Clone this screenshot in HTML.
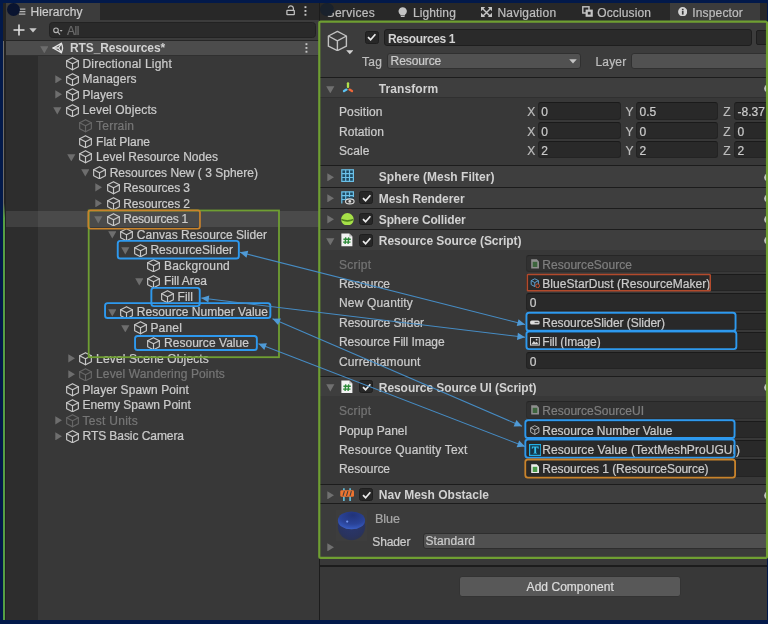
<!DOCTYPE html>
<html lang="en"><head><meta charset="utf-8"><title>Unity Hierarchy and Inspector</title>
<style>
html,body{margin:0;padding:0;overflow:hidden;}
html{width:768px;height:624px;}
body{width:768px;height:624px;overflow:hidden;background:#02194a;position:relative;
font-family:"Liberation Sans",sans-serif;font-size:12px;}
#root{position:absolute;left:0;top:0;width:768px;height:624px;overflow:hidden;will-change:transform;}
.a{position:absolute;display:block;}
.t{position:absolute;white-space:nowrap;line-height:16px;height:16px;-webkit-text-stroke:0.22px currentColor;}
</style></head><body><div id="root">
<div class="a" style="left:3px;top:3.4px;width:315.8px;height:616.6px;background:#383838;"></div>
<div class="a" style="left:3px;top:3.4px;width:4px;height:616.6px;background:#232323;"></div>
<div class="a" style="left:6px;top:3.4px;width:312.8px;height:16.4px;background:#282828;"></div>
<div class="a" style="left:6px;top:3.4px;width:93.6px;height:17px;background:#3c3c3c;"></div>
<div class="a" style="left:6px;top:19.8px;width:312.8px;height:20px;background:#3c3c3c;"></div>
<div class="a" style="left:6px;top:39.6px;width:313px;height:1.2px;background:#262626;"></div>
<div class="a" style="left:48.5px;top:22.3px;width:267px;height:15.3px;background:#2a2a2a;border:1px solid #222;box-sizing:border-box;border-radius:3.5px;"></div>
<div class="a" style="left:6px;top:41px;width:31.6px;height:579px;background:#2d2d2d;"></div>
<div class="a" style="left:6px;top:40.8px;width:313px;height:14.2px;background:#4c4c4c;"></div>
<div class="a" style="left:6px;top:55px;width:313px;height:0.8px;background:#303030;"></div>
<div class="a" style="left:6px;top:210.9px;width:312.8px;height:16.2px;background:#4a4a4a;"></div>
<div class="a" style="left:6px;top:210.9px;width:31.6px;height:16.2px;background:#404040;"></div>
<div class="a" style="left:3px;top:41px;width:1px;height:176px;background:#6c6c6c;"></div>
<div class="a" style="left:3px;top:203px;width:2px;height:417px;background:linear-gradient(to bottom,rgba(85,160,69,0) 0px,#55a045 15px,#55a045 100%);"></div>
<svg class="a" style="left:19.3px;top:7.5px;" width="6.4" height="7" viewBox="0 0 6.4 7"><g stroke="#b4b4b4" stroke-width="1.25"><path d="M0 1H6.4M0 3.55H6.4M0 6.1H6.4"/></g></svg>
<svg class="a" style="left:13px;top:24px;" width="12" height="12" viewBox="0 0 12 12"><path d="M6 0.5V11.5M0.5 6H11.5" stroke="#e0e0e0" stroke-width="1.6"/></svg>
<svg class="a" style="left:29px;top:28px;" width="8" height="5" viewBox="0 0 8 5"><path d="M0.3 0.3H7.7L4 4.6Z" fill="#c8c8c8"/></svg>
<svg class="a" style="left:53px;top:26.5px;" width="10" height="9" viewBox="0 0 10 9"><g fill="none" stroke="#b8b8b8" stroke-width="1.1"><circle cx="3" cy="3.3" r="2.3"/><path d="M4.8 5 L7 7.6"/></g><path d="M6.6 3 H9.6 L8.1 4.8 Z" fill="#b8b8b8"/></svg>
<svg class="a" style="left:285.6px;top:5.4px;" width="9.4" height="10.6" viewBox="0 0 9.4 10.6"><g fill="none" stroke="#c0c0c0" stroke-width="1.25"><path d="M2.3 2.9 A2.6 2.6 0 0 1 7.4 3.2 V5.4"/><rect x="0.9" y="5.5" width="7.4" height="4.2" rx="0.5"/></g></svg>
<svg class="a" style="left:303.9px;top:5.9px;" width="3" height="10" viewBox="0 0 3 10"><g fill="#c4c4c4"><rect x="0.5" y="0.2" width="1.9" height="1.9"/><rect x="0.5" y="4" width="1.9" height="1.9"/><rect x="0.5" y="7.8" width="1.9" height="1.9"/></g></svg>
<svg class="a" style="left:304.9px;top:43.1px;" width="3" height="10" viewBox="0 0 3 10"><g fill="#c4c4c4"><rect x="0.5" y="0.2" width="1.9" height="1.9"/><rect x="0.5" y="4" width="1.9" height="1.9"/><rect x="0.5" y="7.8" width="1.9" height="1.9"/></g></svg>
<svg class="a" style="left:39.7px;top:45.6px;" width="8.6" height="7.6" viewBox="0 0 8.6 7.6"><path d="M0.2 0.3 L8.4 0.3 L4.3 7.4 Z" fill="#6c6c6c"/></svg>
<svg class="a" style="left:51.8px;top:41.7px;" width="12" height="12" viewBox="0 0 13.4 13"><g fill="none" stroke="#e4e4e4" stroke-width="1.5" stroke-linejoin="round" stroke-linecap="round"><path d="M1.2 6.5 L10.4 1.3 Q13.2 6.5 10.4 11.7 Z"/><path d="M1.2 6.5 H7.4 M7.4 6.5 L10.6 1.2 M7.4 6.5 L10.6 11.8"/></g></svg>
<svg class="a" style="left:65.8px;top:57.32px;" width="13.02" height="13.39" viewBox="0 0 14 14.4"><g fill="none" stroke="#c8c8c8" stroke-width="1.25" stroke-linejoin="round" stroke-linecap="round"><path d="M7 0.7 L13.3 4 L13.3 10.4 L7 13.7 L0.7 10.4 L0.7 4 Z"/><path d="M0.7 4 L7 7.2 L13.3 4 M7 7.2 V13.7"/></g></svg>
<svg class="a" style="left:65.8px;top:72.84px;" width="13.02" height="13.39" viewBox="0 0 14 14.4"><g fill="none" stroke="#c8c8c8" stroke-width="1.25" stroke-linejoin="round" stroke-linecap="round"><path d="M7 0.7 L13.3 4 L13.3 10.4 L7 13.7 L0.7 10.4 L0.7 4 Z"/><path d="M0.7 4 L7 7.2 L13.3 4 M7 7.2 V13.7"/></g></svg>
<svg class="a" style="left:54.5px;top:74.74px;" width="7.2" height="8.6" viewBox="0 0 7.2 8.6"><path d="M0.3 0.2 L7 4.3 L0.3 8.4 Z" fill="#6e6e6e"/></svg>
<svg class="a" style="left:65.8px;top:88.36px;" width="13.02" height="13.39" viewBox="0 0 14 14.4"><g fill="none" stroke="#c8c8c8" stroke-width="1.25" stroke-linejoin="round" stroke-linecap="round"><path d="M7 0.7 L13.3 4 L13.3 10.4 L7 13.7 L0.7 10.4 L0.7 4 Z"/><path d="M0.7 4 L7 7.2 L13.3 4 M7 7.2 V13.7"/></g></svg>
<svg class="a" style="left:54.5px;top:90.26px;" width="7.2" height="8.6" viewBox="0 0 7.2 8.6"><path d="M0.3 0.2 L7 4.3 L0.3 8.4 Z" fill="#6e6e6e"/></svg>
<svg class="a" style="left:65.8px;top:103.88px;" width="13.02" height="13.39" viewBox="0 0 14 14.4"><g fill="none" stroke="#c8c8c8" stroke-width="1.25" stroke-linejoin="round" stroke-linecap="round"><path d="M7 0.7 L13.3 4 L13.3 10.4 L7 13.7 L0.7 10.4 L0.7 4 Z"/><path d="M0.7 4 L7 7.2 L13.3 4 M7 7.2 V13.7"/></g></svg>
<svg class="a" style="left:53.4px;top:107.28px;" width="8.6" height="7.6" viewBox="0 0 8.6 7.6"><path d="M0.2 0.3 L8.4 0.3 L4.3 7.4 Z" fill="#6e6e6e"/></svg>
<svg class="a" style="left:79.38px;top:119.4px;" width="13.02" height="13.39" viewBox="0 0 14 14.4"><g fill="none" stroke="#666666" stroke-width="1.25" stroke-linejoin="round" stroke-linecap="round"><path d="M7 0.7 L13.3 4 L13.3 10.4 L7 13.7 L0.7 10.4 L0.7 4 Z"/><path d="M0.7 4 L7 7.2 L13.3 4 M7 7.2 V13.7"/></g></svg>
<svg class="a" style="left:79.38px;top:134.92px;" width="13.02" height="13.39" viewBox="0 0 14 14.4"><g fill="none" stroke="#c8c8c8" stroke-width="1.25" stroke-linejoin="round" stroke-linecap="round"><path d="M7 0.7 L13.3 4 L13.3 10.4 L7 13.7 L0.7 10.4 L0.7 4 Z"/><path d="M0.7 4 L7 7.2 L13.3 4 M7 7.2 V13.7"/></g></svg>
<svg class="a" style="left:79.38px;top:150.44px;" width="13.02" height="13.39" viewBox="0 0 14 14.4"><g fill="none" stroke="#c8c8c8" stroke-width="1.25" stroke-linejoin="round" stroke-linecap="round"><path d="M7 0.7 L13.3 4 L13.3 10.4 L7 13.7 L0.7 10.4 L0.7 4 Z"/><path d="M0.7 4 L7 7.2 L13.3 4 M7 7.2 V13.7"/></g></svg>
<svg class="a" style="left:66.98px;top:153.84px;" width="8.6" height="7.6" viewBox="0 0 8.6 7.6"><path d="M0.2 0.3 L8.4 0.3 L4.3 7.4 Z" fill="#6e6e6e"/></svg>
<svg class="a" style="left:92.96px;top:165.96px;" width="13.02" height="13.39" viewBox="0 0 14 14.4"><g fill="none" stroke="#c8c8c8" stroke-width="1.25" stroke-linejoin="round" stroke-linecap="round"><path d="M7 0.7 L13.3 4 L13.3 10.4 L7 13.7 L0.7 10.4 L0.7 4 Z"/><path d="M0.7 4 L7 7.2 L13.3 4 M7 7.2 V13.7"/></g></svg>
<svg class="a" style="left:80.56px;top:169.36px;" width="8.6" height="7.6" viewBox="0 0 8.6 7.6"><path d="M0.2 0.3 L8.4 0.3 L4.3 7.4 Z" fill="#6e6e6e"/></svg>
<svg class="a" style="left:106.54px;top:181.48px;" width="13.02" height="13.39" viewBox="0 0 14 14.4"><g fill="none" stroke="#c8c8c8" stroke-width="1.25" stroke-linejoin="round" stroke-linecap="round"><path d="M7 0.7 L13.3 4 L13.3 10.4 L7 13.7 L0.7 10.4 L0.7 4 Z"/><path d="M0.7 4 L7 7.2 L13.3 4 M7 7.2 V13.7"/></g></svg>
<svg class="a" style="left:95.24px;top:183.38px;" width="7.2" height="8.6" viewBox="0 0 7.2 8.6"><path d="M0.3 0.2 L7 4.3 L0.3 8.4 Z" fill="#6e6e6e"/></svg>
<svg class="a" style="left:106.54px;top:197.0px;" width="13.02" height="13.39" viewBox="0 0 14 14.4"><g fill="none" stroke="#c8c8c8" stroke-width="1.25" stroke-linejoin="round" stroke-linecap="round"><path d="M7 0.7 L13.3 4 L13.3 10.4 L7 13.7 L0.7 10.4 L0.7 4 Z"/><path d="M0.7 4 L7 7.2 L13.3 4 M7 7.2 V13.7"/></g></svg>
<svg class="a" style="left:95.24px;top:198.9px;" width="7.2" height="8.6" viewBox="0 0 7.2 8.6"><path d="M0.3 0.2 L7 4.3 L0.3 8.4 Z" fill="#6e6e6e"/></svg>
<svg class="a" style="left:106.54px;top:212.52px;" width="13.02" height="13.39" viewBox="0 0 14 14.4"><g fill="none" stroke="#c8c8c8" stroke-width="1.25" stroke-linejoin="round" stroke-linecap="round"><path d="M7 0.7 L13.3 4 L13.3 10.4 L7 13.7 L0.7 10.4 L0.7 4 Z"/><path d="M0.7 4 L7 7.2 L13.3 4 M7 7.2 V13.7"/></g></svg>
<svg class="a" style="left:94.14px;top:215.92px;" width="8.6" height="7.6" viewBox="0 0 8.6 7.6"><path d="M0.2 0.3 L8.4 0.3 L4.3 7.4 Z" fill="#6e6e6e"/></svg>
<svg class="a" style="left:120.12px;top:228.04px;" width="13.02" height="13.39" viewBox="0 0 14 14.4"><g fill="none" stroke="#c8c8c8" stroke-width="1.25" stroke-linejoin="round" stroke-linecap="round"><path d="M7 0.7 L13.3 4 L13.3 10.4 L7 13.7 L0.7 10.4 L0.7 4 Z"/><path d="M0.7 4 L7 7.2 L13.3 4 M7 7.2 V13.7"/></g></svg>
<svg class="a" style="left:107.72px;top:231.44px;" width="8.6" height="7.6" viewBox="0 0 8.6 7.6"><path d="M0.2 0.3 L8.4 0.3 L4.3 7.4 Z" fill="#6e6e6e"/></svg>
<svg class="a" style="left:133.7px;top:243.56px;" width="13.02" height="13.39" viewBox="0 0 14 14.4"><g fill="none" stroke="#c8c8c8" stroke-width="1.25" stroke-linejoin="round" stroke-linecap="round"><path d="M7 0.7 L13.3 4 L13.3 10.4 L7 13.7 L0.7 10.4 L0.7 4 Z"/><path d="M0.7 4 L7 7.2 L13.3 4 M7 7.2 V13.7"/></g></svg>
<svg class="a" style="left:121.3px;top:246.96px;" width="8.6" height="7.6" viewBox="0 0 8.6 7.6"><path d="M0.2 0.3 L8.4 0.3 L4.3 7.4 Z" fill="#6e6e6e"/></svg>
<svg class="a" style="left:147.28px;top:259.08px;" width="13.02" height="13.39" viewBox="0 0 14 14.4"><g fill="none" stroke="#c8c8c8" stroke-width="1.25" stroke-linejoin="round" stroke-linecap="round"><path d="M7 0.7 L13.3 4 L13.3 10.4 L7 13.7 L0.7 10.4 L0.7 4 Z"/><path d="M0.7 4 L7 7.2 L13.3 4 M7 7.2 V13.7"/></g></svg>
<svg class="a" style="left:147.28px;top:274.6px;" width="13.02" height="13.39" viewBox="0 0 14 14.4"><g fill="none" stroke="#c8c8c8" stroke-width="1.25" stroke-linejoin="round" stroke-linecap="round"><path d="M7 0.7 L13.3 4 L13.3 10.4 L7 13.7 L0.7 10.4 L0.7 4 Z"/><path d="M0.7 4 L7 7.2 L13.3 4 M7 7.2 V13.7"/></g></svg>
<svg class="a" style="left:134.88px;top:278.0px;" width="8.6" height="7.6" viewBox="0 0 8.6 7.6"><path d="M0.2 0.3 L8.4 0.3 L4.3 7.4 Z" fill="#6e6e6e"/></svg>
<svg class="a" style="left:160.86px;top:290.12px;" width="13.02" height="13.39" viewBox="0 0 14 14.4"><g fill="none" stroke="#c8c8c8" stroke-width="1.25" stroke-linejoin="round" stroke-linecap="round"><path d="M7 0.7 L13.3 4 L13.3 10.4 L7 13.7 L0.7 10.4 L0.7 4 Z"/><path d="M0.7 4 L7 7.2 L13.3 4 M7 7.2 V13.7"/></g></svg>
<svg class="a" style="left:120.12px;top:305.64px;" width="13.02" height="13.39" viewBox="0 0 14 14.4"><g fill="none" stroke="#c8c8c8" stroke-width="1.25" stroke-linejoin="round" stroke-linecap="round"><path d="M7 0.7 L13.3 4 L13.3 10.4 L7 13.7 L0.7 10.4 L0.7 4 Z"/><path d="M0.7 4 L7 7.2 L13.3 4 M7 7.2 V13.7"/></g></svg>
<svg class="a" style="left:107.72px;top:309.04px;" width="8.6" height="7.6" viewBox="0 0 8.6 7.6"><path d="M0.2 0.3 L8.4 0.3 L4.3 7.4 Z" fill="#6e6e6e"/></svg>
<svg class="a" style="left:133.7px;top:321.16px;" width="13.02" height="13.39" viewBox="0 0 14 14.4"><g fill="none" stroke="#c8c8c8" stroke-width="1.25" stroke-linejoin="round" stroke-linecap="round"><path d="M7 0.7 L13.3 4 L13.3 10.4 L7 13.7 L0.7 10.4 L0.7 4 Z"/><path d="M0.7 4 L7 7.2 L13.3 4 M7 7.2 V13.7"/></g></svg>
<svg class="a" style="left:121.3px;top:324.56px;" width="8.6" height="7.6" viewBox="0 0 8.6 7.6"><path d="M0.2 0.3 L8.4 0.3 L4.3 7.4 Z" fill="#6e6e6e"/></svg>
<svg class="a" style="left:147.28px;top:336.68px;" width="13.02" height="13.39" viewBox="0 0 14 14.4"><g fill="none" stroke="#c8c8c8" stroke-width="1.25" stroke-linejoin="round" stroke-linecap="round"><path d="M7 0.7 L13.3 4 L13.3 10.4 L7 13.7 L0.7 10.4 L0.7 4 Z"/><path d="M0.7 4 L7 7.2 L13.3 4 M7 7.2 V13.7"/></g></svg>
<svg class="a" style="left:79.38px;top:352.2px;" width="13.02" height="13.39" viewBox="0 0 14 14.4"><g fill="none" stroke="#c8c8c8" stroke-width="1.25" stroke-linejoin="round" stroke-linecap="round"><path d="M7 0.7 L13.3 4 L13.3 10.4 L7 13.7 L0.7 10.4 L0.7 4 Z"/><path d="M0.7 4 L7 7.2 L13.3 4 M7 7.2 V13.7"/></g></svg>
<svg class="a" style="left:68.08px;top:354.1px;" width="7.2" height="8.6" viewBox="0 0 7.2 8.6"><path d="M0.3 0.2 L7 4.3 L0.3 8.4 Z" fill="#6e6e6e"/></svg>
<svg class="a" style="left:79.38px;top:367.72px;" width="13.02" height="13.39" viewBox="0 0 14 14.4"><g fill="none" stroke="#666666" stroke-width="1.25" stroke-linejoin="round" stroke-linecap="round"><path d="M7 0.7 L13.3 4 L13.3 10.4 L7 13.7 L0.7 10.4 L0.7 4 Z"/><path d="M0.7 4 L7 7.2 L13.3 4 M7 7.2 V13.7"/></g></svg>
<svg class="a" style="left:68.08px;top:369.62px;" width="7.2" height="8.6" viewBox="0 0 7.2 8.6"><path d="M0.3 0.2 L7 4.3 L0.3 8.4 Z" fill="#6e6e6e"/></svg>
<svg class="a" style="left:65.8px;top:383.24px;" width="13.02" height="13.39" viewBox="0 0 14 14.4"><g fill="none" stroke="#c8c8c8" stroke-width="1.25" stroke-linejoin="round" stroke-linecap="round"><path d="M7 0.7 L13.3 4 L13.3 10.4 L7 13.7 L0.7 10.4 L0.7 4 Z"/><path d="M0.7 4 L7 7.2 L13.3 4 M7 7.2 V13.7"/></g></svg>
<svg class="a" style="left:65.8px;top:398.76px;" width="13.02" height="13.39" viewBox="0 0 14 14.4"><g fill="none" stroke="#c8c8c8" stroke-width="1.25" stroke-linejoin="round" stroke-linecap="round"><path d="M7 0.7 L13.3 4 L13.3 10.4 L7 13.7 L0.7 10.4 L0.7 4 Z"/><path d="M0.7 4 L7 7.2 L13.3 4 M7 7.2 V13.7"/></g></svg>
<svg class="a" style="left:65.8px;top:414.28px;" width="13.02" height="13.39" viewBox="0 0 14 14.4"><g fill="none" stroke="#666666" stroke-width="1.25" stroke-linejoin="round" stroke-linecap="round"><path d="M7 0.7 L13.3 4 L13.3 10.4 L7 13.7 L0.7 10.4 L0.7 4 Z"/><path d="M0.7 4 L7 7.2 L13.3 4 M7 7.2 V13.7"/></g></svg>
<svg class="a" style="left:54.5px;top:416.18px;" width="7.2" height="8.6" viewBox="0 0 7.2 8.6"><path d="M0.3 0.2 L7 4.3 L0.3 8.4 Z" fill="#6e6e6e"/></svg>
<svg class="a" style="left:65.8px;top:429.8px;" width="13.02" height="13.39" viewBox="0 0 14 14.4"><g fill="none" stroke="#c8c8c8" stroke-width="1.25" stroke-linejoin="round" stroke-linecap="round"><path d="M7 0.7 L13.3 4 L13.3 10.4 L7 13.7 L0.7 10.4 L0.7 4 Z"/><path d="M0.7 4 L7 7.2 L13.3 4 M7 7.2 V13.7"/></g></svg>
<svg class="a" style="left:54.5px;top:431.7px;" width="7.2" height="8.6" viewBox="0 0 7.2 8.6"><path d="M0.3 0.2 L7 4.3 L0.3 8.4 Z" fill="#6e6e6e"/></svg>
<div class="a" style="left:318.8px;top:3.4px;width:448.2px;height:616.6px;background:#383838;"></div>
<div class="a" style="left:318.8px;top:3.4px;width:1.3px;height:616.6px;background:#1c1c1c;"></div>
<div class="a" style="left:320.1px;top:3.4px;width:446.9px;height:18px;background:#282828;"></div>
<div class="a" style="left:669.8px;top:3.4px;width:89.8px;height:19px;background:#3c3c3c;"></div>
<svg class="a" style="left:398.4px;top:6.6px;" width="9.4" height="10.8" viewBox="0 0 9.4 10.8"><path d="M4.7 0.2 A4.1 4.1 0 0 1 7 7.7 V8.4 H2.4 V7.7 A4.1 4.1 0 0 1 4.7 0.2 Z M2.8 9.1 H6.6 V10.6 H2.8 Z" fill="#c4c4c4"/></svg>
<svg class="a" style="left:481px;top:7.2px;" width="11" height="10" viewBox="0 0 11 10"><g fill="#c4c4c4"><path d="M0 0 H4.2 L0 4.2 Z M11 0 V4.2 L6.8 0 Z M0 10 V5.8 L4.2 10 Z M11 10 H6.8 L11 5.8 Z"/><path d="M2 1 L10 9 L9 10 L1 2 Z M9 1 L10 2 L2 10 L1 9 Z"/></g></svg>
<svg class="a" style="left:582.3px;top:6.2px;" width="11" height="11" viewBox="0 0 11 11"><g fill="none" stroke="#c4c4c4" stroke-width="1.4"><rect x="0.8" y="0.8" width="6.2" height="6.2"/></g><rect x="3.6" y="3.6" width="7.2" height="7.2" fill="#c4c4c4"/><rect x="5.8" y="5.8" width="2.8" height="2.8" fill="#282828"/></svg>
<svg class="a" style="left:678px;top:7px;" width="9.4" height="9.4" viewBox="0 0 9.4 9.4"><circle cx="4.7" cy="4.7" r="4.6" fill="#d4d4d4"/><rect x="3.9" y="4" width="1.7" height="3.6" fill="#3c3c3c"/><rect x="3.9" y="1.8" width="1.7" height="1.5" fill="#3c3c3c"/></svg>
<div class="a" style="left:320.1px;top:21px;width:446.9px;height:55.8px;background:#3c3c3c;"></div>
<div class="a" style="left:320.1px;top:76.8px;width:446.9px;height:1.3px;background:#1c1c1c;"></div>
<svg class="a" style="left:327.1px;top:29.6px;" width="21" height="21.8" viewBox="0 0 21 21.8"><g fill="none" stroke="#c2c2c2" stroke-width="1.4" stroke-linejoin="round"><path d="M10.4 1.4 L19.4 6 L19.4 16.2 L10.4 20.6 L1.4 16.2 L1.4 6 Z"/><path d="M1.4 6 L10.4 10.8 L19.4 6 M10.4 10.8 V20.6"/></g></svg>
<svg class="a" style="left:345.6px;top:50.2px;" width="7.6" height="4.6" viewBox="0 0 7.6 4.6"><path d="M0.2 0.2H7.4L3.8 4.3Z" fill="#d0d0d0"/></svg>
<div class="a" style="left:365px;top:30.5px;width:13.5px;height:13.5px;background:#272727;border:1px solid #1e1e1e;box-sizing:border-box;border-radius:2.5px;"></div>
<svg class="a" style="left:367.3px;top:33.1px;" width="9.4" height="8" viewBox="0 0 9.4 8"><path d="M1 4.2 L3.6 6.7 L8.4 1.2" fill="none" stroke="#ececec" stroke-width="1.7"/></svg>
<div class="a" style="left:384.4px;top:29px;width:367.4px;height:16.8px;background:#2a2a2a;border:1px solid #1e1e1e;box-sizing:border-box;border-radius:3px;"></div>
<div class="a" style="left:755.5px;top:29.5px;width:14px;height:15px;background:#2a2a2a;border:1px solid #1e1e1e;box-sizing:border-box;border-radius:2px;"></div>
<div class="a" style="left:386.9px;top:53.2px;width:194.6px;height:15.5px;background:#515151;border:1px solid #303030;box-sizing:border-box;border-radius:3px;"></div>
<svg class="a" style="left:569px;top:59px;" width="8" height="4.8" viewBox="0 0 8 4.8"><path d="M0.2 0.2H7.8L4 4.5Z" fill="#c4c4c4"/></svg>
<div class="a" style="left:631px;top:53.2px;width:140px;height:15.5px;background:#515151;border:1px solid #303030;box-sizing:border-box;border-radius:3px;"></div>
<div class="a" style="left:320.1px;top:78.1px;width:446.9px;height:19.3px;background:#3e3e3e;"></div>
<div class="a" style="left:320.1px;top:76.8px;width:446.9px;height:1.3px;background:#1c1c1c;"></div>
<svg class="a" style="left:326.1px;top:85.6px;" width="8.6" height="7.6" viewBox="0 0 8.6 7.6"><path d="M0.2 0.3 L8.4 0.3 L4.3 7.4 Z" fill="#707070"/></svg>
<svg class="a" style="left:763.6px;top:84.2px;" width="4.4" height="9" viewBox="0 0 4.4 9"><circle cx="4.5" cy="4.5" r="4.3" fill="#c8c8c8"/></svg>
<svg class="a" style="left:340.5px;top:81.2px;" width="14" height="12" viewBox="0 0 14 12"><g stroke-width="2.3" stroke-linecap="round"><path d="M7 2.3 V6" stroke="#b2e24c"/><path d="M5.5 8.6 L3 10.1" stroke="#5cc4f4"/><path d="M8.5 8.6 L11 10.1" stroke="#f0683a"/></g></svg>
<div class="a" style="left:320.1px;top:97.4px;width:446.9px;height:1px;background:#303030;"></div>
<div class="a" style="left:538px;top:102.45px;width:82.5px;height:17.3px;background:#292929;border:1px solid #232323;box-sizing:border-box;border-radius:3px;border-top-color:#1a1a1a;"></div>
<div class="a" style="left:636.2px;top:102.45px;width:81.7px;height:17.3px;background:#292929;border:1px solid #232323;box-sizing:border-box;border-radius:3px;border-top-color:#1a1a1a;"></div>
<div class="a" style="left:734.2px;top:102.45px;width:40px;height:17.3px;background:#292929;border:1px solid #232323;box-sizing:border-box;border-radius:3px;border-top-color:#1a1a1a;"></div>
<div class="a" style="left:538px;top:121.8px;width:82.5px;height:17.3px;background:#292929;border:1px solid #232323;box-sizing:border-box;border-radius:3px;border-top-color:#1a1a1a;"></div>
<div class="a" style="left:636.2px;top:121.8px;width:81.7px;height:17.3px;background:#292929;border:1px solid #232323;box-sizing:border-box;border-radius:3px;border-top-color:#1a1a1a;"></div>
<div class="a" style="left:734.2px;top:121.8px;width:40px;height:17.3px;background:#292929;border:1px solid #232323;box-sizing:border-box;border-radius:3px;border-top-color:#1a1a1a;"></div>
<div class="a" style="left:538px;top:141.15px;width:82.5px;height:17.3px;background:#292929;border:1px solid #232323;box-sizing:border-box;border-radius:3px;border-top-color:#1a1a1a;"></div>
<div class="a" style="left:636.2px;top:141.15px;width:81.7px;height:17.3px;background:#292929;border:1px solid #232323;box-sizing:border-box;border-radius:3px;border-top-color:#1a1a1a;"></div>
<div class="a" style="left:734.2px;top:141.15px;width:40px;height:17.3px;background:#292929;border:1px solid #232323;box-sizing:border-box;border-radius:3px;border-top-color:#1a1a1a;"></div>
<div class="a" style="left:320.1px;top:166px;width:446.9px;height:20.5px;background:#3e3e3e;"></div>
<div class="a" style="left:320.1px;top:164.7px;width:446.9px;height:1.3px;background:#1c1c1c;"></div>
<svg class="a" style="left:327px;top:172.5px;" width="7.2" height="8.6" viewBox="0 0 7.2 8.6"><path d="M0.3 0.2 L7 4.3 L0.3 8.4 Z" fill="#707070"/></svg>
<svg class="a" style="left:763.6px;top:172.5px;" width="4.4" height="9" viewBox="0 0 4.4 9"><circle cx="4.5" cy="4.5" r="4.3" fill="#c8c8c8"/></svg>
<svg class="a" style="left:340.9px;top:169.2px;" width="13.2" height="13.2" viewBox="0 0 13.2 13.2"><rect x="0.8" y="0.8" width="11.6" height="11.6" fill="#1e4a62"/><g fill="none" stroke="#6cc2ea" stroke-width="1.2"><rect x="0.8" y="0.8" width="11.6" height="11.6"/><path d="M4.7 0.8V12.4M8.5 0.8V12.4M0.8 4.7H12.4M0.8 8.5H12.4"/></g></svg>
<div class="a" style="left:320.1px;top:187.9px;width:446.9px;height:19.8px;background:#3e3e3e;"></div>
<div class="a" style="left:320.1px;top:186.6px;width:446.9px;height:1.3px;background:#1c1c1c;"></div>
<svg class="a" style="left:327px;top:193.7px;" width="7.2" height="8.6" viewBox="0 0 7.2 8.6"><path d="M0.3 0.2 L7 4.3 L0.3 8.4 Z" fill="#707070"/></svg>
<div class="a" style="left:359.4px;top:191.3px;width:13.2px;height:12.8px;background:#272727;border:1px solid #1e1e1e;box-sizing:border-box;border-radius:2.5px;"></div>
<svg class="a" style="left:361.7px;top:193.9px;" width="9.4" height="8" viewBox="0 0 9.4 8"><path d="M1 4.2 L3.6 6.7 L8.4 1.2" fill="none" stroke="#ececec" stroke-width="1.7"/></svg>
<svg class="a" style="left:763.6px;top:193.7px;" width="4.4" height="9" viewBox="0 0 4.4 9"><circle cx="4.5" cy="4.5" r="4.3" fill="#c8c8c8"/></svg>
<svg class="a" style="left:340.9px;top:190.6px;" width="14.4" height="14.4" viewBox="0 0 14.4 14.4"><rect x="0.8" y="0.8" width="11.6" height="9" fill="#1e4a62"/><g fill="none" stroke="#6cc2ea" stroke-width="1.2"><path d="M0.8 12.4 V0.8 H12.4 V6"/><path d="M4.7 0.8V8.6M8.5 0.8V6M0.8 4.7H12.4M0.8 8.5H4.6"/></g><ellipse cx="8.8" cy="10.4" rx="4.3" ry="2.5" fill="#3e3e3e" stroke="#dcdcdc" stroke-width="1.1"/><circle cx="8.8" cy="10.4" r="1.4" fill="#dcdcdc"/></svg>
<div class="a" style="left:320.1px;top:209px;width:446.9px;height:20.1px;background:#3e3e3e;"></div>
<div class="a" style="left:320.1px;top:207.7px;width:446.9px;height:1.3px;background:#1c1c1c;"></div>
<svg class="a" style="left:327px;top:215.0px;" width="7.2" height="8.6" viewBox="0 0 7.2 8.6"><path d="M0.3 0.2 L7 4.3 L0.3 8.4 Z" fill="#707070"/></svg>
<div class="a" style="left:359.4px;top:212.6px;width:13.2px;height:12.8px;background:#272727;border:1px solid #1e1e1e;box-sizing:border-box;border-radius:2.5px;"></div>
<svg class="a" style="left:361.7px;top:215.2px;" width="9.4" height="8" viewBox="0 0 9.4 8"><path d="M1 4.2 L3.6 6.7 L8.4 1.2" fill="none" stroke="#ececec" stroke-width="1.7"/></svg>
<svg class="a" style="left:763.6px;top:215.0px;" width="4.4" height="9" viewBox="0 0 4.4 9"><circle cx="4.5" cy="4.5" r="4.3" fill="#c8c8c8"/></svg>
<svg class="a" style="left:341.3px;top:212.8px;" width="12.8" height="12.6" viewBox="0 0 12.8 12.6"><ellipse cx="6.4" cy="6.3" rx="6.3" ry="6.2" fill="#a6e048"/><path d="M0.5 6.6 Q6.4 10 12.3 6.6 Q6.4 8.6 0.5 6.6Z" fill="#4a7a1a" stroke="#4a7a1a" stroke-width="0.9"/></svg>
<div class="a" style="left:320.1px;top:230.3px;width:446.9px;height:19.7px;background:#3e3e3e;"></div>
<div class="a" style="left:320.1px;top:229.0px;width:446.9px;height:1.3px;background:#1c1c1c;"></div>
<svg class="a" style="left:326.1px;top:237.8px;" width="8.6" height="7.6" viewBox="0 0 8.6 7.6"><path d="M0.2 0.3 L8.4 0.3 L4.3 7.4 Z" fill="#707070"/></svg>
<div class="a" style="left:359.4px;top:234.0px;width:13.2px;height:12.8px;background:#272727;border:1px solid #1e1e1e;box-sizing:border-box;border-radius:2.5px;"></div>
<svg class="a" style="left:361.7px;top:236.6px;" width="9.4" height="8" viewBox="0 0 9.4 8"><path d="M1 4.2 L3.6 6.7 L8.4 1.2" fill="none" stroke="#ececec" stroke-width="1.7"/></svg>
<svg class="a" style="left:763.6px;top:236.4px;" width="4.4" height="9" viewBox="0 0 4.4 9"><circle cx="4.5" cy="4.5" r="4.3" fill="#c8c8c8"/></svg>
<svg class="a" style="left:341.4px;top:233.2px;" width="11.8" height="13.6" viewBox="0 0 11.8 13.6"><path d="M0.4 0.4 H8.2 L11.4 3.6 V13.2 H0.4 Z" fill="#f2f2f2"/><path d="M8.2 0.4 V3.6 H11.4 Z" fill="#bdbdbd"/><g stroke="#2e8b3a" stroke-width="1.4"><path d="M4.7 4.4 L4.1 11 M7.7 4.4 L7.1 11 M2.4 6.3 H9.8 M2.1 9.1 H9.5"/></g></svg>
<div class="a" style="left:526.4px;top:254.65px;width:245px;height:17.3px;background:#313131;border:1px solid #2c2c2c;box-sizing:border-box;border-radius:3px;border-top-color:#262626;"></div>
<svg class="a" style="left:530.9px;top:258.8px;" width="8.2" height="9.8" viewBox="0 0 8.2 9.8"><g opacity="0.5"><path d="M0.2 0.2 H5.8 L8 2.4 V9.6 H0.2 Z" fill="#ececec"/><rect x="1.7" y="2.8" width="4.6" height="5.2" fill="#4a9a4a"/></g></svg>
<div class="a" style="left:526.4px;top:274.05px;width:245px;height:17.3px;background:#292929;border:1px solid #232323;box-sizing:border-box;border-radius:3px;border-top-color:#1a1a1a;"></div>
<svg class="a" style="left:530.3px;top:277.99999999999994px;" width="10.4" height="10.4" viewBox="0 0 10.4 10.4"><g fill="none" stroke-width="1"><path d="M4.8 0.8 L8.4 2.6 V6 M4.8 8.6 L1.2 6.6 V2.6 L4.8 0.8 M1.2 2.6 L4.8 4.6 L8.4 2.6 M4.8 4.6V8.6" stroke="#5e9ecc"/><circle cx="7.6" cy="7.8" r="1.9" stroke="#d2522e"/></g></svg>
<div class="a" style="left:526.4px;top:293.45px;width:245px;height:17.3px;background:#292929;border:1px solid #232323;box-sizing:border-box;border-radius:3px;border-top-color:#1a1a1a;"></div>
<div class="a" style="left:526.4px;top:312.85px;width:245px;height:17.3px;background:#292929;border:1px solid #232323;box-sizing:border-box;border-radius:3px;border-top-color:#1a1a1a;"></div>
<svg class="a" style="left:530.2px;top:319.5px;" width="9.8" height="5" viewBox="0 0 9.8 5"><rect x="0.1" y="0.5" width="9.5" height="4" rx="1.6" fill="#dedede"/><rect x="4.6" y="1.9" width="3.8" height="1.2" fill="#5a5a5a"/></svg>
<div class="a" style="left:526.4px;top:332.25px;width:245px;height:17.3px;background:#292929;border:1px solid #232323;box-sizing:border-box;border-radius:3px;border-top-color:#1a1a1a;"></div>
<svg class="a" style="left:530.2px;top:337.4px;" width="9.8" height="8.6" viewBox="0 0 9.8 8.6"><rect x="0.5" y="0.5" width="8.8" height="7.6" fill="none" stroke="#d4d4d4" stroke-width="1"/><path d="M1.4 7.2 L3.8 3.9 L5.4 5.8 L6.8 4.7 L8.4 7.2 Z" fill="#d4d4d4"/><circle cx="6.6" cy="2.7" r="0.9" fill="#d4d4d4"/></svg>
<div class="a" style="left:526.4px;top:351.65px;width:245px;height:17.3px;background:#292929;border:1px solid #232323;box-sizing:border-box;border-radius:3px;border-top-color:#1a1a1a;"></div>
<div class="a" style="left:320.1px;top:377px;width:446.9px;height:19.2px;background:#3e3e3e;"></div>
<div class="a" style="left:320.1px;top:375.7px;width:446.9px;height:1.3px;background:#1c1c1c;"></div>
<svg class="a" style="left:326.1px;top:384.1px;" width="8.6" height="7.6" viewBox="0 0 8.6 7.6"><path d="M0.2 0.3 L8.4 0.3 L4.3 7.4 Z" fill="#707070"/></svg>
<div class="a" style="left:359.4px;top:380.3px;width:13.2px;height:12.8px;background:#272727;border:1px solid #1e1e1e;box-sizing:border-box;border-radius:2.5px;"></div>
<svg class="a" style="left:361.7px;top:382.9px;" width="9.4" height="8" viewBox="0 0 9.4 8"><path d="M1 4.2 L3.6 6.7 L8.4 1.2" fill="none" stroke="#ececec" stroke-width="1.7"/></svg>
<svg class="a" style="left:763.6px;top:382.7px;" width="4.4" height="9" viewBox="0 0 4.4 9"><circle cx="4.5" cy="4.5" r="4.3" fill="#c8c8c8"/></svg>
<svg class="a" style="left:341.4px;top:379.8px;" width="11.8" height="13.6" viewBox="0 0 11.8 13.6"><path d="M0.4 0.4 H8.2 L11.4 3.6 V13.2 H0.4 Z" fill="#f2f2f2"/><path d="M8.2 0.4 V3.6 H11.4 Z" fill="#bdbdbd"/><g stroke="#2e8b3a" stroke-width="1.4"><path d="M4.7 4.4 L4.1 11 M7.7 4.4 L7.1 11 M2.4 6.3 H9.8 M2.1 9.1 H9.5"/></g></svg>
<div class="a" style="left:526.4px;top:401.25px;width:245px;height:17.3px;background:#313131;border:1px solid #2c2c2c;box-sizing:border-box;border-radius:3px;border-top-color:#262626;"></div>
<svg class="a" style="left:530.9px;top:405.4px;" width="8.2" height="9.8" viewBox="0 0 8.2 9.8"><g opacity="0.5"><path d="M0.2 0.2 H5.8 L8 2.4 V9.6 H0.2 Z" fill="#ececec"/><rect x="1.7" y="2.8" width="4.6" height="5.2" fill="#4a9a4a"/></g></svg>
<div class="a" style="left:526.4px;top:420.65px;width:245px;height:17.3px;background:#292929;border:1px solid #232323;box-sizing:border-box;border-radius:3px;border-top-color:#1a1a1a;"></div>
<svg class="a" style="left:530.2px;top:424.8px;" width="9.6" height="10.2" viewBox="0 0 9.6 10.2"><g fill="none" stroke="#bcbcbc" stroke-width="0.9" stroke-linejoin="round"><path d="M4.8 0.7 L8.9 2.8 V7.2 L4.8 9.5 L0.7 7.2 V2.8 Z M0.7 2.8 L4.8 5 L8.9 2.8 M4.8 5V9.5"/></g></svg>
<div class="a" style="left:526.4px;top:440.05px;width:245px;height:17.3px;background:#292929;border:1px solid #232323;box-sizing:border-box;border-radius:3px;border-top-color:#1a1a1a;"></div>
<svg class="a" style="left:528.9px;top:443.6px;" width="12.4" height="12" viewBox="0 0 12.4 12"><rect x="0.6" y="0.6" width="11.2" height="10.8" fill="#143648" stroke="#22b0e8" stroke-width="1.2"/><path d="M2.8 2.5 H9.6 V4.7 H8.8 L8.5 3.5 H7.1 V8.7 L8 9 V9.6 H4.4 V9 L5.3 8.7 V3.5 H3.9 L3.6 4.7 H2.8 Z" fill="#34c4f6"/></svg>
<div class="a" style="left:526.4px;top:459.45px;width:245px;height:17.3px;background:#292929;border:1px solid #232323;box-sizing:border-box;border-radius:3px;border-top-color:#1a1a1a;"></div>
<svg class="a" style="left:530.9px;top:463.6px;" width="8.2" height="9.8" viewBox="0 0 8.2 9.8"><g opacity="1"><path d="M0.2 0.2 H5.8 L8 2.4 V9.6 H0.2 Z" fill="#ececec"/><rect x="1.7" y="2.8" width="4.6" height="5.2" fill="#4a9a4a"/></g></svg>
<div class="a" style="left:320.1px;top:485px;width:446.9px;height:18px;background:#3e3e3e;"></div>
<div class="a" style="left:320.1px;top:483.7px;width:446.9px;height:1.3px;background:#1c1c1c;"></div>
<svg class="a" style="left:327px;top:490.6px;" width="7.2" height="8.6" viewBox="0 0 7.2 8.6"><path d="M0.3 0.2 L7 4.3 L0.3 8.4 Z" fill="#707070"/></svg>
<div class="a" style="left:359.4px;top:488.2px;width:13.2px;height:12.8px;background:#272727;border:1px solid #1e1e1e;box-sizing:border-box;border-radius:2.5px;"></div>
<svg class="a" style="left:361.7px;top:490.8px;" width="9.4" height="8" viewBox="0 0 9.4 8"><path d="M1 4.2 L3.6 6.7 L8.4 1.2" fill="none" stroke="#ececec" stroke-width="1.7"/></svg>
<svg class="a" style="left:763.6px;top:490.6px;" width="4.4" height="9" viewBox="0 0 4.4 9"><circle cx="4.5" cy="4.5" r="4.3" fill="#c8c8c8"/></svg>
<svg class="a" style="left:340.4px;top:488px;" width="14.4" height="13.4" viewBox="0 0 14.4 13.4"><g stroke="#6ad4f6" stroke-width="1.4"><path d="M3.9 0.2 V2.4 M3.9 8.6 V13.2 M10.1 0.2 V2.4 M10.1 8.6 V13.2"/></g><rect x="0.3" y="2.3" width="13.7" height="6.4" rx="1.3" fill="#ee7430"/><g stroke="#3e3e3e" stroke-width="1.1"><path d="M4.4 3.2 L3 7.8 M7.9 3.2 L6.5 7.8 M11.4 3.2 L10 7.8"/></g></svg>
<div class="a" style="left:320.1px;top:503px;width:446.9px;height:1.4px;background:#1c1c1c;"></div>
<div class="a" style="left:320.1px;top:504.4px;width:446.9px;height:53px;background:#3b3b3b;"></div>
<div class="a" style="left:336px;top:510px;width:31px;height:31px;background:#3d3d3d;"></div>
<svg class="a" style="left:337px;top:511px;" width="29" height="30" viewBox="0 0 29 30"><defs><radialGradient id="g1" cx="0.55" cy="0.2" r="0.85"><stop offset="0" stop-color="#213378"/><stop offset="0.6" stop-color="#2a4398"/><stop offset="0.88" stop-color="#3558bc"/><stop offset="1" stop-color="#4d78e2"/></radialGradient><radialGradient id="g2" cx="0.5" cy="0.4" r="0.62"><stop offset="0" stop-color="#2a376e"/><stop offset="0.75" stop-color="#29335f"/><stop offset="1" stop-color="#2b3350"/></radialGradient></defs><ellipse cx="14.5" cy="15.6" rx="13.7" ry="13.6" fill="url(#g2)"/><ellipse cx="14.5" cy="9.4" rx="13.6" ry="8.9" fill="url(#g1)"/><circle cx="10.2" cy="10.6" r="1.1" fill="#7396ee"/></svg>
<svg class="a" style="left:327px;top:542.8px;" width="7.2" height="8.6" viewBox="0 0 7.2 8.6"><path d="M0.3 0.2 L7 4.3 L0.3 8.4 Z" fill="#707070"/></svg>
<div class="a" style="left:422.5px;top:533px;width:350px;height:16.2px;background:#505050;border:1px solid #2e2e2e;box-sizing:border-box;border-radius:3px;"></div>
<div class="a" style="left:320.1px;top:557.4px;width:446.9px;height:8px;background:#383838;"></div>
<div class="a" style="left:320.1px;top:565.4px;width:446.9px;height:1.5px;background:#1c1c1c;"></div>
<div class="a" style="left:459.2px;top:575.9px;width:221.4px;height:20.9px;background:#585858;border:1px solid #333;box-sizing:border-box;border-radius:3px;"></div>
<span class="t" id="t0" style="left:30.5px;top:4px;color:#cbcbcb;letter-spacing:0.071px;">Hierarchy</span>
<span class="t" id="t1" style="left:67px;top:23px;color:#6c6c6c;letter-spacing:-0.448px;">All</span>
<span class="t" id="t2" style="left:70px;top:40px;color:#d2d2d2;font-weight:bold;-webkit-text-stroke:0;letter-spacing:-0.123px;">RTS_Resources*</span>
<span class="t" id="t3" style="left:82.5px;top:56px;color:#cbcbcb;letter-spacing:0.203px;">Directional Light</span>
<span class="t" id="t4" style="left:82.5px;top:71px;color:#cbcbcb;letter-spacing:0.109px;">Managers</span>
<span class="t" id="t5" style="left:82.5px;top:87px;color:#cbcbcb;letter-spacing:0.069px;">Players</span>
<span class="t" id="t6" style="left:82.5px;top:102px;color:#cbcbcb;letter-spacing:0.138px;">Level Objects</span>
<span class="t" id="t7" style="left:96.08px;top:118px;color:#767676;letter-spacing:0.212px;">Terrain</span>
<span class="t" id="t8" style="left:96.08px;top:134px;color:#cbcbcb;letter-spacing:-0.011px;">Flat Plane</span>
<span class="t" id="t9" style="left:96.08px;top:149px;color:#cbcbcb;letter-spacing:0.026px;">Level Resource Nodes</span>
<span class="t" id="t10" style="left:109.66px;top:165px;color:#cbcbcb;letter-spacing:0.011px;">Resources New ( 3 Sphere)</span>
<span class="t" id="t11" style="left:123.24000000000001px;top:180px;color:#cbcbcb;letter-spacing:-0.056px;">Resources 3</span>
<span class="t" id="t12" style="left:123.24000000000001px;top:196px;color:#cbcbcb;letter-spacing:-0.056px;">Resources 2</span>
<span class="t" id="t13" style="left:123.24000000000001px;top:211px;color:#cbcbcb;letter-spacing:-0.238px;">Resources 1</span>
<span class="t" id="t14" style="left:136.82px;top:227px;color:#cbcbcb;letter-spacing:0.035px;">Canvas Resource Slider</span>
<span class="t" id="t15" style="left:150.4px;top:242px;color:#cbcbcb;letter-spacing:0.040px;">ResourceSlider</span>
<span class="t" id="t16" style="left:163.98000000000002px;top:258px;color:#cbcbcb;letter-spacing:0.197px;">Background</span>
<span class="t" id="t17" style="left:163.98000000000002px;top:273px;color:#cbcbcb;letter-spacing:-0.038px;">Fill Area</span>
<span class="t" id="t18" style="left:177.56px;top:289px;color:#cbcbcb;letter-spacing:0.028px;">Fill</span>
<span class="t" id="t19" style="left:136.82px;top:304px;color:#cbcbcb;letter-spacing:0.032px;">Resource Number Value</span>
<span class="t" id="t20" style="left:150.4px;top:320px;color:#cbcbcb;letter-spacing:0.179px;">Panel</span>
<span class="t" id="t21" style="left:163.98000000000002px;top:335px;color:#cbcbcb;letter-spacing:0.037px;">Resource Value</span>
<span class="t" id="t22" style="left:96.08px;top:351px;color:#cbcbcb;letter-spacing:0.150px;">Level Scene Objects</span>
<span class="t" id="t23" style="left:96.08px;top:366px;color:#767676;letter-spacing:0.119px;">Level Wandering Points</span>
<span class="t" id="t24" style="left:82.5px;top:382px;color:#cbcbcb;letter-spacing:0.098px;">Player Spawn Point</span>
<span class="t" id="t25" style="left:82.5px;top:397px;color:#cbcbcb;letter-spacing:0.014px;">Enemy Spawn Point</span>
<span class="t" id="t26" style="left:82.5px;top:413px;color:#767676;letter-spacing:0.281px;">Test Units</span>
<span class="t" id="t27" style="left:82.5px;top:428px;color:#cbcbcb;letter-spacing:-0.062px;">RTS Basic Camera</span>
<span class="t" id="t28" style="left:326.6px;top:5px;color:#bebebe;letter-spacing:0.298px;">Services</span>
<span class="t" id="t29" style="left:412.9px;top:5px;color:#bebebe;letter-spacing:0.132px;">Lighting</span>
<span class="t" id="t30" style="left:497.4px;top:5px;color:#bebebe;letter-spacing:0.220px;">Navigation</span>
<span class="t" id="t31" style="left:597.3px;top:5px;color:#bebebe;letter-spacing:0.113px;">Occlusion</span>
<span class="t" id="t32" style="left:692.3px;top:5px;color:#bebebe;letter-spacing:0.149px;">Inspector</span>
<span class="t" id="t33" style="left:388px;top:31px;color:#d4d4d4;font-weight:bold;-webkit-text-stroke:0;letter-spacing:-0.398px;">Resources 1</span>
<span class="t" id="t34" style="left:361.9px;top:54px;color:#bebebe;letter-spacing:0.347px;">Tag</span>
<span class="t" id="t35" style="left:390.6px;top:53px;color:#cbcbcb;letter-spacing:-0.095px;">Resource</span>
<span class="t" id="t36" style="left:595.5px;top:54px;color:#bebebe;letter-spacing:0.154px;">Layer</span>
<span class="t" id="t37" style="left:378.8px;top:81px;color:#d2d2d2;font-weight:bold;-webkit-text-stroke:0;letter-spacing:0.085px;">Transform</span>
<span class="t" id="t38" style="left:339px;top:104px;color:#cbcbcb;letter-spacing:0.100px;">Position</span>
<span class="t" id="t39" style="left:527.3px;top:104px;color:#bcbcbc;">X</span>
<span class="t" id="t40" style="left:541.3px;top:104px;color:#cbcbcb;">0</span>
<span class="t" id="t41" style="left:625.5px;top:104px;color:#bcbcbc;">Y</span>
<span class="t" id="t42" style="left:639.5px;top:104px;color:#cbcbcb;">0.5</span>
<span class="t" id="t43" style="left:723.3px;top:104px;color:#bcbcbc;">Z</span>
<span class="t" id="t44" style="left:737.5px;top:104px;color:#cbcbcb;">-8.37</span>
<span class="t" id="t45" style="left:339px;top:124px;color:#cbcbcb;letter-spacing:0.037px;">Rotation</span>
<span class="t" id="t46" style="left:527.3px;top:124px;color:#bcbcbc;">X</span>
<span class="t" id="t47" style="left:541.3px;top:124px;color:#cbcbcb;">0</span>
<span class="t" id="t48" style="left:625.5px;top:124px;color:#bcbcbc;">Y</span>
<span class="t" id="t49" style="left:639.5px;top:124px;color:#cbcbcb;">0</span>
<span class="t" id="t50" style="left:723.3px;top:124px;color:#bcbcbc;">Z</span>
<span class="t" id="t51" style="left:737.5px;top:124px;color:#cbcbcb;">0</span>
<span class="t" id="t52" style="left:339px;top:143px;color:#cbcbcb;letter-spacing:0.094px;">Scale</span>
<span class="t" id="t53" style="left:527.3px;top:143px;color:#bcbcbc;">X</span>
<span class="t" id="t54" style="left:541.3px;top:143px;color:#cbcbcb;">2</span>
<span class="t" id="t55" style="left:625.5px;top:143px;color:#bcbcbc;">Y</span>
<span class="t" id="t56" style="left:639.5px;top:143px;color:#cbcbcb;">2</span>
<span class="t" id="t57" style="left:723.3px;top:143px;color:#bcbcbc;">Z</span>
<span class="t" id="t58" style="left:737.5px;top:143px;color:#cbcbcb;">2</span>
<span class="t" id="t59" style="left:378.8px;top:169px;color:#d2d2d2;font-weight:bold;-webkit-text-stroke:0;letter-spacing:0.017px;">Sphere (Mesh Filter)</span>
<span class="t" id="t60" style="left:378.8px;top:191px;color:#d2d2d2;font-weight:bold;-webkit-text-stroke:0;letter-spacing:-0.077px;">Mesh Renderer</span>
<span class="t" id="t61" style="left:378.8px;top:212px;color:#d2d2d2;font-weight:bold;-webkit-text-stroke:0;letter-spacing:-0.133px;">Sphere Collider</span>
<span class="t" id="t62" style="left:378.8px;top:233px;color:#d2d2d2;font-weight:bold;-webkit-text-stroke:0;letter-spacing:-0.056px;">Resource Source (Script)</span>
<span class="t" id="t63" style="left:339px;top:257px;color:#747474;letter-spacing:0.302px;">Script</span>
<span class="t" id="t64" style="left:339px;top:276px;color:#cbcbcb;letter-spacing:-0.045px;">Resource</span>
<span class="t" id="t65" style="left:339px;top:295px;color:#cbcbcb;letter-spacing:0.164px;">New Quantity</span>
<span class="t" id="t66" style="left:339px;top:315px;color:#cbcbcb;letter-spacing:-0.025px;">Resource Slider</span>
<span class="t" id="t67" style="left:339px;top:334px;color:#cbcbcb;letter-spacing:-0.064px;">Resource Fill Image</span>
<span class="t" id="t68" style="left:339px;top:354px;color:#cbcbcb;letter-spacing:0.112px;">Currentamount</span>
<span class="t" id="t69" style="left:542.3px;top:257px;color:#7e7e7e;letter-spacing:0.022px;">ResourceSource</span>
<span class="t" id="t70" style="left:542.3px;top:276px;color:#cbcbcb;letter-spacing:0.045px;">BlueStarDust (ResourceMaker)</span>
<span class="t" id="t71" style="left:529.6999999999999px;top:295px;color:#cbcbcb;">0</span>
<span class="t" id="t72" style="left:542.3px;top:315px;color:#cbcbcb;letter-spacing:-0.059px;">ResourceSlider (Slider)</span>
<span class="t" id="t73" style="left:542.3px;top:334px;color:#cbcbcb;letter-spacing:-0.151px;">Fill (Image)</span>
<span class="t" id="t74" style="left:529.6999999999999px;top:354px;color:#cbcbcb;">0</span>
<span class="t" id="t75" style="left:378.8px;top:380px;color:#d2d2d2;font-weight:bold;-webkit-text-stroke:0;letter-spacing:-0.062px;">Resource Source UI (Script)</span>
<span class="t" id="t76" style="left:339px;top:403px;color:#747474;letter-spacing:0.302px;">Script</span>
<span class="t" id="t77" style="left:339px;top:423px;color:#cbcbcb;letter-spacing:-0.067px;">Popup Panel</span>
<span class="t" id="t78" style="left:339px;top:442px;color:#cbcbcb;letter-spacing:0.181px;">Resource Quantity Text</span>
<span class="t" id="t79" style="left:339px;top:461px;color:#cbcbcb;letter-spacing:-0.045px;">Resource</span>
<span class="t" id="t80" style="left:542.3px;top:403px;color:#7e7e7e;letter-spacing:0.019px;">ResourceSourceUI</span>
<span class="t" id="t81" style="left:542.3px;top:423px;color:#cbcbcb;letter-spacing:-0.015px;">Resource Number Value</span>
<span class="t" id="t82" style="left:542.3px;top:442px;color:#cbcbcb;letter-spacing:0.058px;">Resource Value (TextMeshProUGUI)</span>
<span class="t" id="t83" style="left:542.3px;top:461px;color:#cbcbcb;letter-spacing:-0.067px;">Resources 1 (ResourceSource)</span>
<span class="t" id="t84" style="left:378.8px;top:487px;color:#d2d2d2;font-weight:bold;-webkit-text-stroke:0;letter-spacing:0.009px;">Nav Mesh Obstacle</span>
<span class="t" id="t85" style="left:375px;top:511px;color:#a6a6a6;font-size:12.6px;letter-spacing:-0.055px;">Blue</span>
<span class="t" id="t86" style="left:372.3px;top:534px;color:#cbcbcb;letter-spacing:-0.117px;">Shader</span>
<span class="t" id="t87" style="left:425.5px;top:533px;color:#cbcbcb;letter-spacing:0.100px;">Standard</span>
<span class="t" id="t88" style="left:526.6px;top:579px;color:#dcdcdc;letter-spacing:0.036px;">Add Component</span>
<div class="a" style="left:6.6px;top:2.9px;width:13px;height:13px;border-radius:7px;background:#0a1430"></div>
<div class="a" style="left:320.3px;top:2.6px;width:13.7px;height:13.7px;border-radius:7px;background:#19212c"></div>
<svg class="a" style="left:0;top:0" width="768" height="624" viewBox="0 0 768 624"><rect x="88.70" y="210.50" width="190.30" height="146.70" rx="0.00" fill="none" stroke="#6f9f32" stroke-width="1.8"/><rect x="88.35" y="210.35" width="111.60" height="18.40" rx="2.15" fill="none" stroke="#c9832b" stroke-width="1.7"/><rect x="117.75" y="240.85" width="121.10" height="17.70" rx="2.55" fill="none" stroke="#2e99ee" stroke-width="1.9"/><rect x="151.35" y="287.85" width="48.40" height="18.30" rx="2.55" fill="none" stroke="#2e99ee" stroke-width="1.9"/><rect x="105.05" y="303.15" width="165.30" height="14.90" rx="2.55" fill="none" stroke="#2e99ee" stroke-width="1.9"/><rect x="135.05" y="335.95" width="121.80" height="14.00" rx="2.55" fill="none" stroke="#2e99ee" stroke-width="1.9"/><rect x="319.27" y="21.68" width="447.75" height="536.25" rx="1.43" fill="none" stroke="#6f9f32" stroke-width="2.15"/><rect x="527.35" y="274.55" width="182.90" height="16.30" rx="0.75" fill="none" stroke="#b34a2c" stroke-width="1.5"/><rect x="526.45" y="312.75" width="209.10" height="18.00" rx="2.55" fill="none" stroke="#2e99ee" stroke-width="1.9"/><rect x="526.45" y="331.55" width="209.90" height="17.60" rx="2.55" fill="none" stroke="#2e99ee" stroke-width="1.9"/><rect x="525.35" y="420.25" width="209.20" height="17.80" rx="2.55" fill="none" stroke="#2e99ee" stroke-width="1.9"/><rect x="525.35" y="439.55" width="209.20" height="18.10" rx="2.55" fill="none" stroke="#2e99ee" stroke-width="1.9"/><rect x="525.30" y="459.50" width="209.80" height="18.10" rx="2.60" fill="none" stroke="#c9832b" stroke-width="1.8"/><path d="M240.00 252.30 L525.00 324.50" stroke="#468cc4" stroke-width="1.05" fill="none"/><path d="M240.00 252.30 L248.25 250.68 L246.48 257.66 Z" fill="#4f9ad6"/><path d="M525.00 324.50 L516.75 326.12 L518.52 319.14 Z" fill="#4f9ad6"/><path d="M201.30 298.10 L525.00 337.30" stroke="#468cc4" stroke-width="1.05" fill="none"/><path d="M201.30 298.10 L209.28 295.44 L208.41 302.59 Z" fill="#4f9ad6"/><path d="M525.00 337.30 L517.02 339.96 L517.89 332.81 Z" fill="#4f9ad6"/><path d="M272.50 318.80 L522.00 426.30" stroke="#468cc4" stroke-width="1.05" fill="none"/><path d="M272.50 318.80 L280.90 318.50 L278.06 325.11 Z" fill="#4f9ad6"/><path d="M522.00 426.30 L513.60 426.60 L516.44 419.99 Z" fill="#4f9ad6"/><path d="M258.50 343.80 L525.00 446.50" stroke="#468cc4" stroke-width="1.05" fill="none"/><path d="M258.50 343.80 L266.89 343.17 L264.30 349.89 Z" fill="#4f9ad6"/><path d="M525.00 446.50 L516.61 447.13 L519.20 440.41 Z" fill="#4f9ad6"/></svg>
</div></body></html>
